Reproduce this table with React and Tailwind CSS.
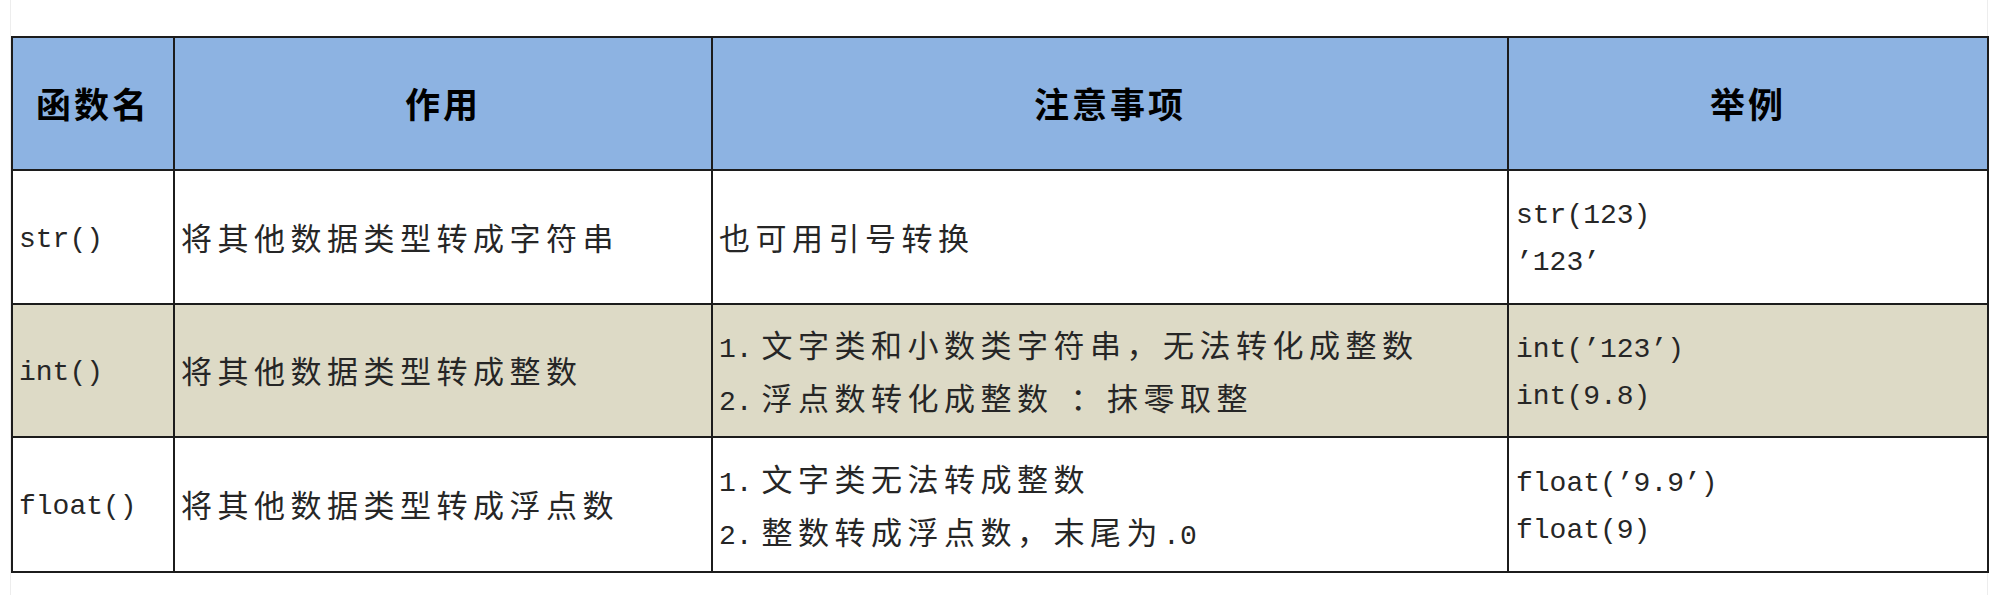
import React from 'react';

const CJK = '"Noto Sans CJK SC", "Noto Sans", sans-serif';
const MONO = '"Liberation Mono", "DejaVu Sans Mono", monospace';

const ROWS = [
  {
    name: 'str()',
    use: '将其他数据类型转成字符串',
    notes: [['', '也可用引号转换']],
    examples: ['str(123)', '’123’'],
    tinted: false,
    h: 'h-[134px]',
  },
  {
    name: 'int()',
    use: '将其他数据类型转成整数',
    notes: [
      ['1.', '文字类和小数类字符串，无法转化成整数'],
      ['2.', '浮点数转化成整数 ：抹零取整'],
    ],
    examples: ['int(’123’)', 'int(9.8)'],
    tinted: true,
    h: 'h-[133px]',
  },
  {
    name: 'float()',
    use: '将其他数据类型转成浮点数',
    notes: [
      ['1.', '文字类无法转成整数'],
      ['2.', '整数转成浮点数，末尾为.0'],
    ],
    examples: ['float(’9.9’)', 'float(9)'],
    tinted: false,
    h: 'h-[135px]',
  },
];

// split a line into half-width (mono) and full-width (CJK) runs
const Mixed = ({ text }) => {
  const runs = text.match(/[\x20-\x7E\u2019]+|[^\x20-\x7E\u2019]+/g) || [];
  return runs.map((run, i) =>
    /[\x20-\x7E\u2019]/.test(run[0]) ? (
      <span key={i} className="text-[28px] whitespace-pre" style={{ fontFamily: MONO }}>
        {run}
      </span>
    ) : (
      <span key={i} className="text-[31px] tracking-[5.5px]" style={{ fontFamily: CJK }}>
        {run}
      </span>
    )
  );
};

const Line = ({ children }) => (
  <div className="leading-[45px] whitespace-nowrap text-[#262626]">{children}</div>
);

const Cell = ({ children, className = '' }) => (
  <td className={`border-2 border-[#1c1c1c] align-middle pt-[6px] ${className}`}>{children}</td>
);

const Head = ({ children }) => (
  <th
    className="border-2 border-[#1c1c1c] text-center text-[35px] font-bold tracking-[3px] text-black"
    style={{ fontFamily: CJK }}
  >
    {children}
  </th>
);

export default function App() {
  return (
    <div className="w-[2000px] h-[595px] bg-white">
      <div className="ml-[10px] w-[1978px] h-[595px] border-x border-[#ededed] pt-[36px]">
        <table className="w-[1978px] border-collapse table-fixed">
          <colgroup>
            <col className="w-[162px]" />
            <col className="w-[538px]" />
            <col className="w-[796px]" />
            <col />
          </colgroup>
          <thead>
            <tr className="h-[133px] bg-[#8db3e2]">
              <Head>函数名</Head>
              <Head>作用</Head>
              <Head>注意事项</Head>
              <Head>举例</Head>
            </tr>
          </thead>
          <tbody>
            {ROWS.map((r) => (
              <tr key={r.name} className={`${r.h} ${r.tinted ? 'bg-[#dddac6]' : 'bg-white'}`}>
                <Cell className="pl-[6px]">
                  <Line>
                    <Mixed text={r.name} />
                  </Line>
                </Cell>
                <Cell className="pl-[6px]">
                  <Line>
                    <Mixed text={r.use} />
                  </Line>
                </Cell>
                <Cell className="pl-[6px]">
                  {r.notes.map(([num, txt], i) => (
                    <Line key={i}>
                      {num && (
                        <span className="text-[28px] mr-[9px]" style={{ fontFamily: MONO }}>
                          {num}
                        </span>
                      )}
                      <Mixed text={txt} />
                    </Line>
                  ))}
                </Cell>
                <Cell className="pl-[7px]">
                  {r.examples.map((ex, i) => (
                    <Line key={i}>
                      <Mixed text={ex} />
                    </Line>
                  ))}
                </Cell>
              </tr>
            ))}
          </tbody>
        </table>
      </div>
    </div>
  );
}
